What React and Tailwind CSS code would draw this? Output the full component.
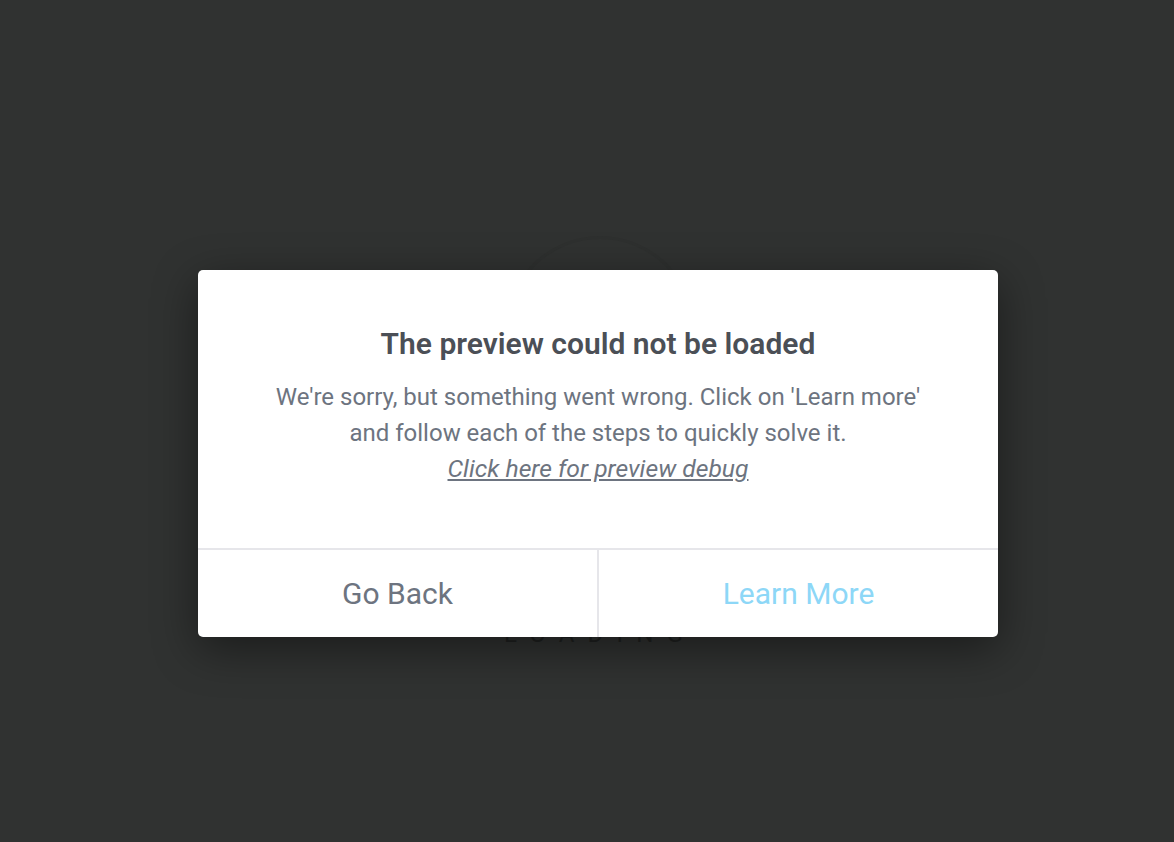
export default function App() {
  return (
    <div
      className="relative h-[842px] w-full overflow-hidden bg-[#303231]"
      style={{ fontFamily: "Roboto, 'Liberation Sans', sans-serif" }}
    >
      {/* background loader */}
      <div className="flex flex-col items-center pl-[26px] pt-[236px]">
        <div className="h-[190px] w-[190px] rounded-full border-[3px] border-[#2e302f]" />
        <div className="mt-[190px] text-[24px] tracking-[0.55em] text-[#1f2120]">LOADING</div>
      </div>

      {/* modal overlay */}
      <div className="absolute left-[198px] top-[270px] w-[800px] overflow-hidden rounded-[5px] bg-white shadow-[0_12px_45px_rgba(0,0,0,0.45)]">
        <div className="flex flex-col items-center px-10 pb-[61px] pt-[58px] text-center">
          <h1 className="text-[30px] font-semibold leading-[32px] text-[#4b4f56]">
            The preview could not be loaded
          </h1>
          <p className="mt-[19px] text-[24px] leading-[36px] text-[#6d7480]">
            We're sorry, but something went wrong. Click on 'Learn more'
            <br />
            and follow each of the steps to quickly solve it.
            <br />
            <a className="text-[24.7px] italic underline text-[#6d7480]" href="#">
              Click here for preview debug
            </a>
          </p>
        </div>
        <div className="h-[2px] bg-[#e6e6ea]" />
        <div className="flex h-[87px]">
          <button className="flex flex-1 items-center justify-center text-[30px] text-[#6d7480]">
            Go Back
          </button>
          <div className="w-[2px] bg-[#e6e6ea]" />
          <button className="flex flex-1 items-center justify-center text-[30px] text-[#8dd7f7]">
            Learn More
          </button>
        </div>
      </div>
    </div>
  );
}
